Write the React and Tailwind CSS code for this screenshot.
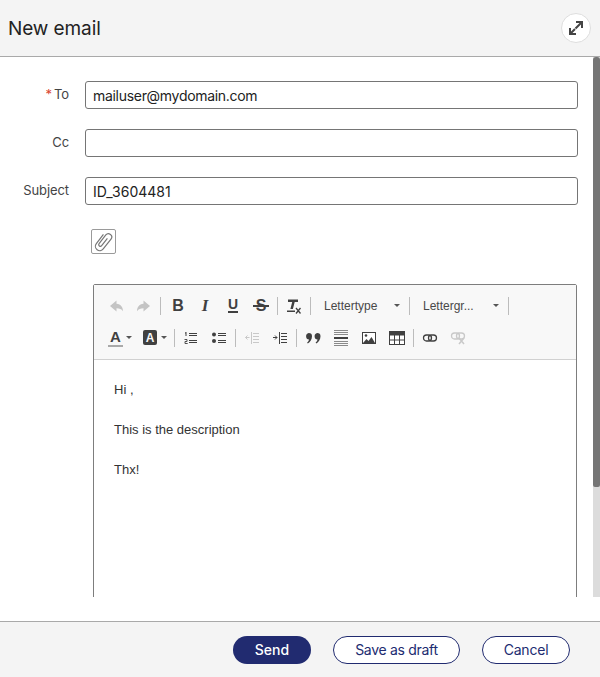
const ink = "#404040";
const faint = "#c9c9c9";

function Sep() {
  return <span className="mx-[3px] h-[18px] w-px bg-[#bcbcbc]" />;
}

function Sep2() {
  return <span className="mx-[2px] h-[18px] w-px bg-[#bcbcbc]" />;
}

function Ico({ children, w = 16 }) {
  return (
    <svg width={w} height="16" viewBox={`0 0 ${w} 16`}>
      {children}
    </svg>
  );
}

function Caret() {
  return <span className="border-x-[3px] border-t-[3px] border-x-transparent border-t-[#555]" />;
}

function Undo({ flip }) {
  return (
    <Ico>
      <path
        transform={flip ? "translate(16 0) scale(-1 1)" : undefined}
        d="M7.500 2.500 1 8l6.500 5.500V10.200c3 0 5 .8 6.500 3 0-4-2-7-6.500-7.500z"
        fill="#c4c4c4"
      />
    </Ico>
  );
}

function Lines({ x, ys, w, color = ink }) {
  return ys.map((y) => <rect key={y} x={x} y={y} width={w} height="1" fill={color} />);
}

function Indent({ color, out }) {
  return (
    <Ico>
      <Lines x={9} ys={[3, 6, 9, 12]} w={6} color={color} />
      <rect x="7" y="2" width="1" height="12" fill={color} />
      <path d={out ? "M1.500 7.500h4M3.500 5.500l-2 2 2 2" : "M1 7.500h4M3 5.500l2 2-2 2"} stroke={color} fill="none" />
    </Ico>
  );
}

function Toolbar() {
  return (
    <div className="border-b border-[#d1d1d1] bg-[#f8f8f8] pl-[11px] pt-[10px] pb-[11px] font-['Liberation_Sans',sans-serif]">
      <div className="flex h-[21px] items-center">
        <span className="flex w-[24px] justify-center"><Undo /></span>
        <span className="flex w-[28px] justify-center"><Undo flip /></span>
        <Sep />
        <span className="flex w-[28px] justify-center text-[16px] font-bold leading-none text-[#404040]">B</span>
        <span className="flex w-[26px] justify-center font-['Liberation_Serif',serif] text-[17px] font-bold italic leading-none text-[#404040]">I</span>
        <span className="flex w-[30px] justify-center">
          <span className="border-b-2 border-[#404040] text-[14px] font-bold leading-[13px] text-[#404040]">U</span>
        </span>
        <span className="flex w-[26px] justify-center">
          <span className="relative px-[1px] text-[16px] font-bold leading-none text-[#404040]">
            S
            <span className="absolute inset-x-[-2px] top-[7px] h-[2px] bg-[#404040]" />
          </span>
        </span>
        <Sep />
        <span className="flex w-[26px] justify-center">
          <Ico w={18}>
            <path d="M3 1.500h10v2.500H9.700L7.900 11H5.400l1.800-7H3z" fill={ink} />
            <rect x="2" y="12.500" width="8" height="1.500" fill={ink} />
            <path d="m11 10 4.500 5.500M15.500 10 11 15.500" stroke={ink} strokeWidth="1.300" />
          </Ico>
        </span>
        <Sep />
        <div className="flex w-[92px] items-center justify-between pl-[10px] pr-[6px] text-[12px] text-[#484848]">
          <span>Lettertype</span>
          <Caret />
        </div>
        <Sep />
        <div className="flex w-[92px] items-center justify-between pl-[10px] pr-[6px] text-[12px] text-[#484848]">
          <span>Lettergr...</span>
          <Caret />
        </div>
        <Sep />
      </div>
      <div className="mt-[11px] flex h-[21px] items-center">
        <span className="flex w-[27px] items-center gap-[3px] pl-[3px]">
          <span className="w-[15px] border-b-2 border-[#a9a9a9] text-center text-[15px] font-bold leading-[16px] text-[#404040]">A</span>
          <Caret />
        </span>
        <span className="ml-[11px] flex w-[29px] items-center gap-[4px]">
          <span className="flex h-[15px] w-[14px] items-center justify-center rounded-[2px] bg-[#404040] text-[12px] font-bold leading-none text-[#f8f8f8]">A</span>
          <Caret />
        </span>
        <Sep2 />
        <span className="flex w-[28px] justify-center">
          <Ico>
            <Lines x={6} ys={[3, 5, 10, 12]} w={8} />
            <path d="M3 2v4M2 3h1" stroke={ink} />
            <path d="M1.500 9.500h2.500v2h-2v2h2.700" stroke={ink} fill="none" strokeWidth=".9" />
          </Ico>
        </span>
        <span className="flex w-[28px] justify-center">
          <Ico>
            <circle cx="3" cy="4.500" r="2" fill={ink} />
            <circle cx="3" cy="11" r="2" fill={ink} />
            <Lines x={7} ys={[3, 5, 10, 12]} w={8} />
          </Ico>
        </span>
        <Sep2 />
        <span className="flex w-[28px] justify-center"><Indent color={faint} out /></span>
        <span className="flex w-[28px] justify-center"><Indent color={ink} /></span>
        <Sep2 />
        <span className="flex w-[28px] justify-center">
          <Ico>
            <path d="M3.700 3a3.300 3.300 0 0 1 3.300 3.300c0 3.200-1.800 6-4.200 7.200l-.7-1c1-.8 1.700-1.700 1.900-3A3.300 3.300 0 0 1 3.700 3zM12.200 3a3.300 3.300 0 0 1 3.300 3.300c0 3.200-1.800 6-4.200 7.200l-.7-1c1-.8 1.700-1.700 1.900-3a3.300 3.300 0 0 1-.3-6.500z" fill={ink} />
          </Ico>
        </span>
        <span className="flex w-[28px] justify-center">
          <Ico>
            <Lines x={1} ys={[0, 2, 4, 11, 13, 15]} w={14} color="#8a8a8a" />
            <rect x="1" y="7" width="14" height="2" fill={ink} />
          </Ico>
        </span>
        <span className="flex w-[28px] justify-center">
          <Ico>
            <rect x="1.500" y="2.500" width="13" height="11" fill="#fff" stroke={ink} />
            <circle cx="5" cy="5.500" r="1.300" fill={ink} />
            <path d="m2 13 3.500-4 2 2 3-4 3.500 6z" fill={ink} />
          </Ico>
        </span>
        <span className="flex w-[28px] justify-center">
          <Ico>
            <rect x="0.500" y="1.500" width="15" height="13" fill="#fff" stroke={ink} />
            <rect x="0.500" y="1.500" width="15" height="4" fill={ink} />
            <path d="M5.500 5v9M10.500 5v9M1 10h14" stroke={ink} />
          </Ico>
        </span>
        <Sep2 />
        <span className="flex w-[28px] justify-center">
          <Ico>
            <rect x="1.500" y="5" width="8" height="6" rx="3" fill="none" stroke={ink} strokeWidth="1.300" />
            <rect x="6.500" y="5" width="8" height="6" rx="3" fill="none" stroke={ink} strokeWidth="1.300" />
          </Ico>
        </span>
        <span className="flex w-[28px] justify-center">
          <Ico>
            <rect x="1.500" y="3" width="8" height="6" rx="3" fill="none" stroke={faint} strokeWidth="1.300" />
            <rect x="6.500" y="3" width="8" height="6" rx="3" fill="none" stroke={faint} strokeWidth="1.300" />
            <path d="m9 8 5 6M14 8l-5 6" stroke={faint} strokeWidth="1.500" />
          </Ico>
        </span>
      </div>
    </div>
  );
}

function Field({ label, value, required, tight }) {
  return (
    <div className="flex h-[28px] items-center">
      <label className="w-[85px] pr-[16px] text-right text-[13px] tracking-[-0.1px] text-[#444]">
        {required && <span className="mr-[2px] text-[#d9442f]">*</span>}
        {label}
      </label>
      <input
        readOnly
        value={value}
        className={`h-[28px] w-[493px] rounded-[3px] border border-[#757575] px-[7px] text-[14px] text-[#222] outline-none ${tight ? "tracking-[-0.3px]" : ""}`}
      />
    </div>
  );
}

export default function App() {
  return (
    <div className="flex h-[677px] w-[600px] flex-col overflow-hidden bg-white font-['Inter',sans-serif]">
      <header className="flex h-[57px] shrink-0 items-center justify-between border-b border-[#a9a9a9] bg-[#f4f4f4] pl-[8px] pr-[9px]">
        <h1 className="pt-[2px] text-[19px] font-normal tracking-[-0.1px] text-[#222]">New email</h1>
        <button className="flex h-[30px] w-[30px] items-center justify-center rounded-full border border-[#dedede] bg-white">
          <svg width="14" height="14" viewBox="0 0 14 14" fill="none" stroke="#444" strokeWidth="2">
            <path d="M7 1h6v6M13 1 6.500 7.500M1 7v6h6M1 13l5-5" />
          </svg>
        </button>
      </header>

      <div className="flex h-[540px] shrink-0">
        <div className="min-w-0 flex-1 overflow-hidden">
          <div className="flex flex-col gap-[20px] pt-[24px]">
            <Field label="To" value="mailuser@mydomain.com" required tight />
            <Field label="Cc" value="" />
            <Field label="Subject" value="ID_3604481" />
          </div>
          <button className="ml-[91px] mt-[24px] flex h-[25px] w-[25px] items-center justify-center rounded-[2px] border border-[#9a9a9a]">
            <svg width="23" height="23" viewBox="0 0 21 21" fill="none" stroke="#777" strokeWidth="1.100">
              <path d="M6.500 5.500v10.500a4 4 0 0 0 8 0V4.500a3 3 0 0 0-6 0V14.500a1.300 1.300 0 0 0 3 0V6" transform="rotate(38 10.500 10.500)" />
            </svg>
          </button>
          <div className="ml-[93px] mt-[30px] h-[400px] w-[484px] rounded-t-[2px] border border-[#7d7d7d]">
            <Toolbar />
            <div className="px-[20px] pt-[20px] font-['Liberation_Sans',sans-serif] text-[13px] leading-[20px] text-[#333]">
              <p>Hi ,</p>
              <p className="mt-[20px]">This is the description</p>
              <p className="mt-[20px]">Thx!</p>
            </div>
          </div>
        </div>
        <div className="w-[7px] bg-[#dcdcdc]">
          <div className="h-[430px] rounded-t-[3px] rounded-b-[2px] bg-[#757575]" />
        </div>
      </div>

      <div className="h-[24px] shrink-0" />

      <footer className="flex flex-1 items-center justify-end gap-[22px] border-t border-[#a9a9a9] bg-[#f4f4f4] pr-[30px]">
        <button className="h-[28px] w-[78px] rounded-full bg-[#212b70] text-[14px] font-medium text-white">Send</button>
        <button className="h-[28px] w-[127px] rounded-full border border-[#212b70] bg-white text-[14px] tracking-[-0.3px] text-[#212b70]">Save as draft</button>
        <button className="h-[28px] w-[88px] rounded-full border border-[#212b70] bg-white text-[14px] tracking-[-0.2px] text-[#212b70]">Cancel</button>
      </footer>
    </div>
  );
}
